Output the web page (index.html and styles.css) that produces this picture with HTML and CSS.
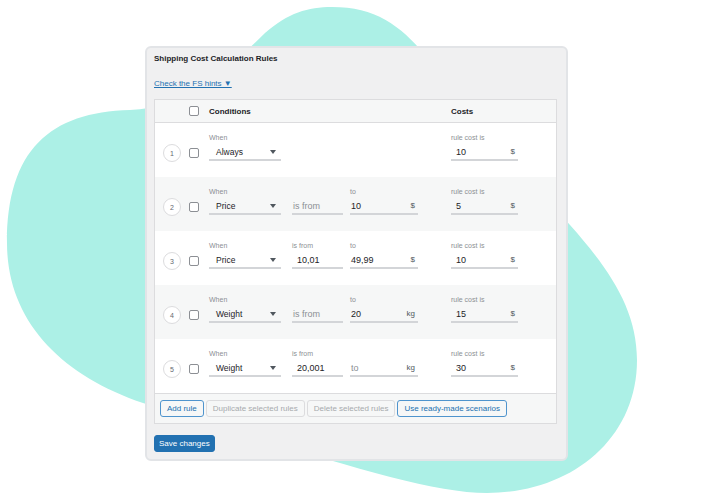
FILE: index.html
```html
<!DOCTYPE html>
<html lang="en">
<head>
    <meta charset="UTF-8">
    <meta name="viewport" content="width=device-width, initial-scale=1.0">
    <title>Shipping Cost Calculation Rules</title>
    <link rel="stylesheet" href="styles.css">
</head>
<body>
    <div class="stage">
        <!-- decorative background blob -->
        <svg class="blob" width="712" height="498" viewBox="0 0 712 498">
            <path d="M332 7 C375 7 400 25 425 55 C470 110 520 170 570 225 C610 270 637 310 637 360 C637 440 570 493 487 493 C420 493 300 450 143 403 C60 375 7 320 7 243 C7 150 50 112 130 110 C190 108 235 62 265 33 C288 13 308 7 332 7 Z" fill="#acf0e6"/>
        </svg>

        <div class="panel">
            <div class="title">Shipping Cost Calculation Rules</div>
            <a class="hints" href="#">Check the FS hints ▼</a>

            <div class="rules">
                <div class="rules-head">
                    <span class="check"></span>
                    <span class="col-cond">Conditions</span>
                    <span class="col-cost">Costs</span>
                </div>

                <div class="rule">
                    <span class="num">1</span>
                    <span class="check"></span>
                    <div class="field f-when">
                        <span class="lbl">When</span>
                        <div class="inp select">Always<span class="caret"></span></div>
                    </div>
                    <div class="field f-cost">
                        <span class="lbl">rule cost is</span>
                        <div class="inp"><span class="val">10</span><span class="unit">$</span></div>
                    </div>
                </div>

                <div class="rule alt">
                    <span class="num">2</span>
                    <span class="check"></span>
                    <div class="field f-when">
                        <span class="lbl">When</span>
                        <div class="inp select">Price<span class="caret"></span></div>
                    </div>
                    <div class="field f-from">
                        <span class="lbl"></span>
                        <div class="inp"><span class="ph">is from</span></div>
                    </div>
                    <div class="field f-to">
                        <span class="lbl">to</span>
                        <div class="inp"><span class="val">10</span><span class="unit">$</span></div>
                    </div>
                    <div class="field f-cost">
                        <span class="lbl">rule cost is</span>
                        <div class="inp"><span class="val">5</span><span class="unit">$</span></div>
                    </div>
                </div>

                <div class="rule">
                    <span class="num">3</span>
                    <span class="check"></span>
                    <div class="field f-when">
                        <span class="lbl">When</span>
                        <div class="inp select">Price<span class="caret"></span></div>
                    </div>
                    <div class="field f-from">
                        <span class="lbl">is from</span>
                        <div class="inp"><span class="val">10,01</span></div>
                    </div>
                    <div class="field f-to">
                        <span class="lbl">to</span>
                        <div class="inp"><span class="val">49,99</span><span class="unit">$</span></div>
                    </div>
                    <div class="field f-cost">
                        <span class="lbl">rule cost is</span>
                        <div class="inp"><span class="val">10</span><span class="unit">$</span></div>
                    </div>
                </div>

                <div class="rule alt">
                    <span class="num">4</span>
                    <span class="check"></span>
                    <div class="field f-when">
                        <span class="lbl">When</span>
                        <div class="inp select">Weight<span class="caret"></span></div>
                    </div>
                    <div class="field f-from">
                        <span class="lbl"></span>
                        <div class="inp"><span class="ph">is from</span></div>
                    </div>
                    <div class="field f-to">
                        <span class="lbl">to</span>
                        <div class="inp"><span class="val">20</span><span class="unit">kg</span></div>
                    </div>
                    <div class="field f-cost">
                        <span class="lbl">rule cost is</span>
                        <div class="inp"><span class="val">15</span><span class="unit">$</span></div>
                    </div>
                </div>

                <div class="rule">
                    <span class="num">5</span>
                    <span class="check"></span>
                    <div class="field f-when">
                        <span class="lbl">When</span>
                        <div class="inp select">Weight<span class="caret"></span></div>
                    </div>
                    <div class="field f-from">
                        <span class="lbl">is from</span>
                        <div class="inp"><span class="val">20,001</span></div>
                    </div>
                    <div class="field f-to">
                        <span class="lbl"></span>
                        <div class="inp"><span class="ph">to</span><span class="unit">kg</span></div>
                    </div>
                    <div class="field f-cost">
                        <span class="lbl">rule cost is</span>
                        <div class="inp"><span class="val">30</span><span class="unit">$</span></div>
                    </div>
                </div>

                <div class="rules-foot">
                    <button class="btn">Add rule</button>
                    <button class="btn" disabled>Duplicate selected rules</button>
                    <button class="btn" disabled>Delete selected rules</button>
                    <button class="btn">Use ready-made scenarios</button>
                </div>
            </div>

            <button class="save">Save changes</button>
        </div>
    </div>
</body>
</html>
```

FILE: styles.css
```css
body {
    margin: 0;
    background: #fff;
    font-family: "Liberation Sans", Arial, sans-serif;
    color: #1d2327;
}
.stage {
    position: relative;
    width: 712px;
    height: 498px;
    overflow: hidden;
}
.blob {
    position: absolute;
    left: 0;
    top: 0;
}
.panel {
    position: relative;
    box-sizing: border-box;
    width: 423px;
    margin: 46px 0 0 145px;
    padding: 5px 9px 7px 7px;
    background: #f0f0f1;
    border: 2px solid #e2e4e7;
    border-radius: 6px;
}
.title {
    font-size: 8px;
    font-weight: bold;
    line-height: 12px;
}
.hints {
    display: inline-block;
    margin-top: 13px;
    font-size: 8px;
    line-height: 12px;
    color: #2271b1;
}
.rules {
    margin-top: 9px;
    background: #fff;
    border: 1px solid #dcdcde;
}
.rules-head {
    display: flex;
    align-items: center;
    height: 22px;
    padding-left: 34px;
    background: #f6f7f7;
    border-bottom: 1px solid #dcdcde;
    font-size: 8px;
    font-weight: bold;
}
.rules-head .col-cond {
    width: 242px;
    margin-left: 10px;
}
.check {
    box-sizing: border-box;
    width: 10px;
    height: 10px;
    flex: none;
    background: #fff;
    border: 1px solid #8c8f94;
    border-radius: 2px;
}
.rule {
    display: flex;
    align-items: flex-start;
    box-sizing: border-box;
    height: 54px;
    padding: 10px 38px 0 8px;
}
.rule.alt {
    background: #f6f7f7;
}
.num {
    box-sizing: border-box;
    display: flex;
    align-items: center;
    justify-content: center;
    width: 18px;
    height: 18px;
    flex: none;
    margin-top: 11px;
    background: #fff;
    border: 1px solid #dcdcde;
    border-radius: 50%;
    font-size: 7px;
    color: #646970;
}
.rule .check {
    margin: 15px 0 0 8px;
}
.field {
    display: flex;
    flex-direction: column;
    flex: none;
}
.f-when {
    width: 72px;
    margin-left: 10px;
}
.f-from {
    width: 51px;
    margin-left: 11px;
}
.f-to {
    width: 68px;
    margin-left: 7px;
}
.f-cost {
    width: 67px;
    margin-left: auto;
}
.lbl {
    height: 9px;
    margin-bottom: 2px;
    font-size: 7px;
    line-height: 9px;
    color: #8c8f94;
}
.inp {
    display: flex;
    align-items: center;
    justify-content: space-between;
    box-sizing: border-box;
    height: 17px;
    padding: 0 3px 0 5px;
    border-bottom: 2px solid #d3d5d8;
    font-size: 9px;
}
.inp.select {
    padding: 0 5px 0 7px;
    font-size: 8.5px;
    color: #1d2327;
}
.f-from .inp, .f-to .inp {
    padding-left: 1px;
}
.f-from .inp .val {
    padding-left: 4px;
}
.caret {
    width: 0;
    height: 0;
    border-left: 3px solid transparent;
    border-right: 3px solid transparent;
    border-top: 4px solid #50575e;
}
.ph {
    color: #8c8f94;
}
.unit {
    font-size: 8px;
    color: #50575e;
}
.rules-foot {
    display: flex;
    gap: 2px;
    padding: 6px 0 6px 5px;
    background: #f6f7f7;
    border-top: 1px solid #dcdcde;
}
.btn {
    height: 17px;
    padding: 0 6px;
    background: #f6f7f7;
    border: 1px solid #4f94cd;
    border-radius: 3px;
    font-family: inherit;
    font-size: 8px;
    color: #2271b1;
}
.btn:disabled {
    border-color: #dcdcde;
    color: #a7aaad;
}
.save {
    display: block;
    height: 17px;
    margin-top: 11px;
    padding: 0 4px;
    background: #2271b1;
    border: 1px solid #2271b1;
    border-radius: 3px;
    font-family: inherit;
    font-size: 8px;
    color: #fff;
}
```
